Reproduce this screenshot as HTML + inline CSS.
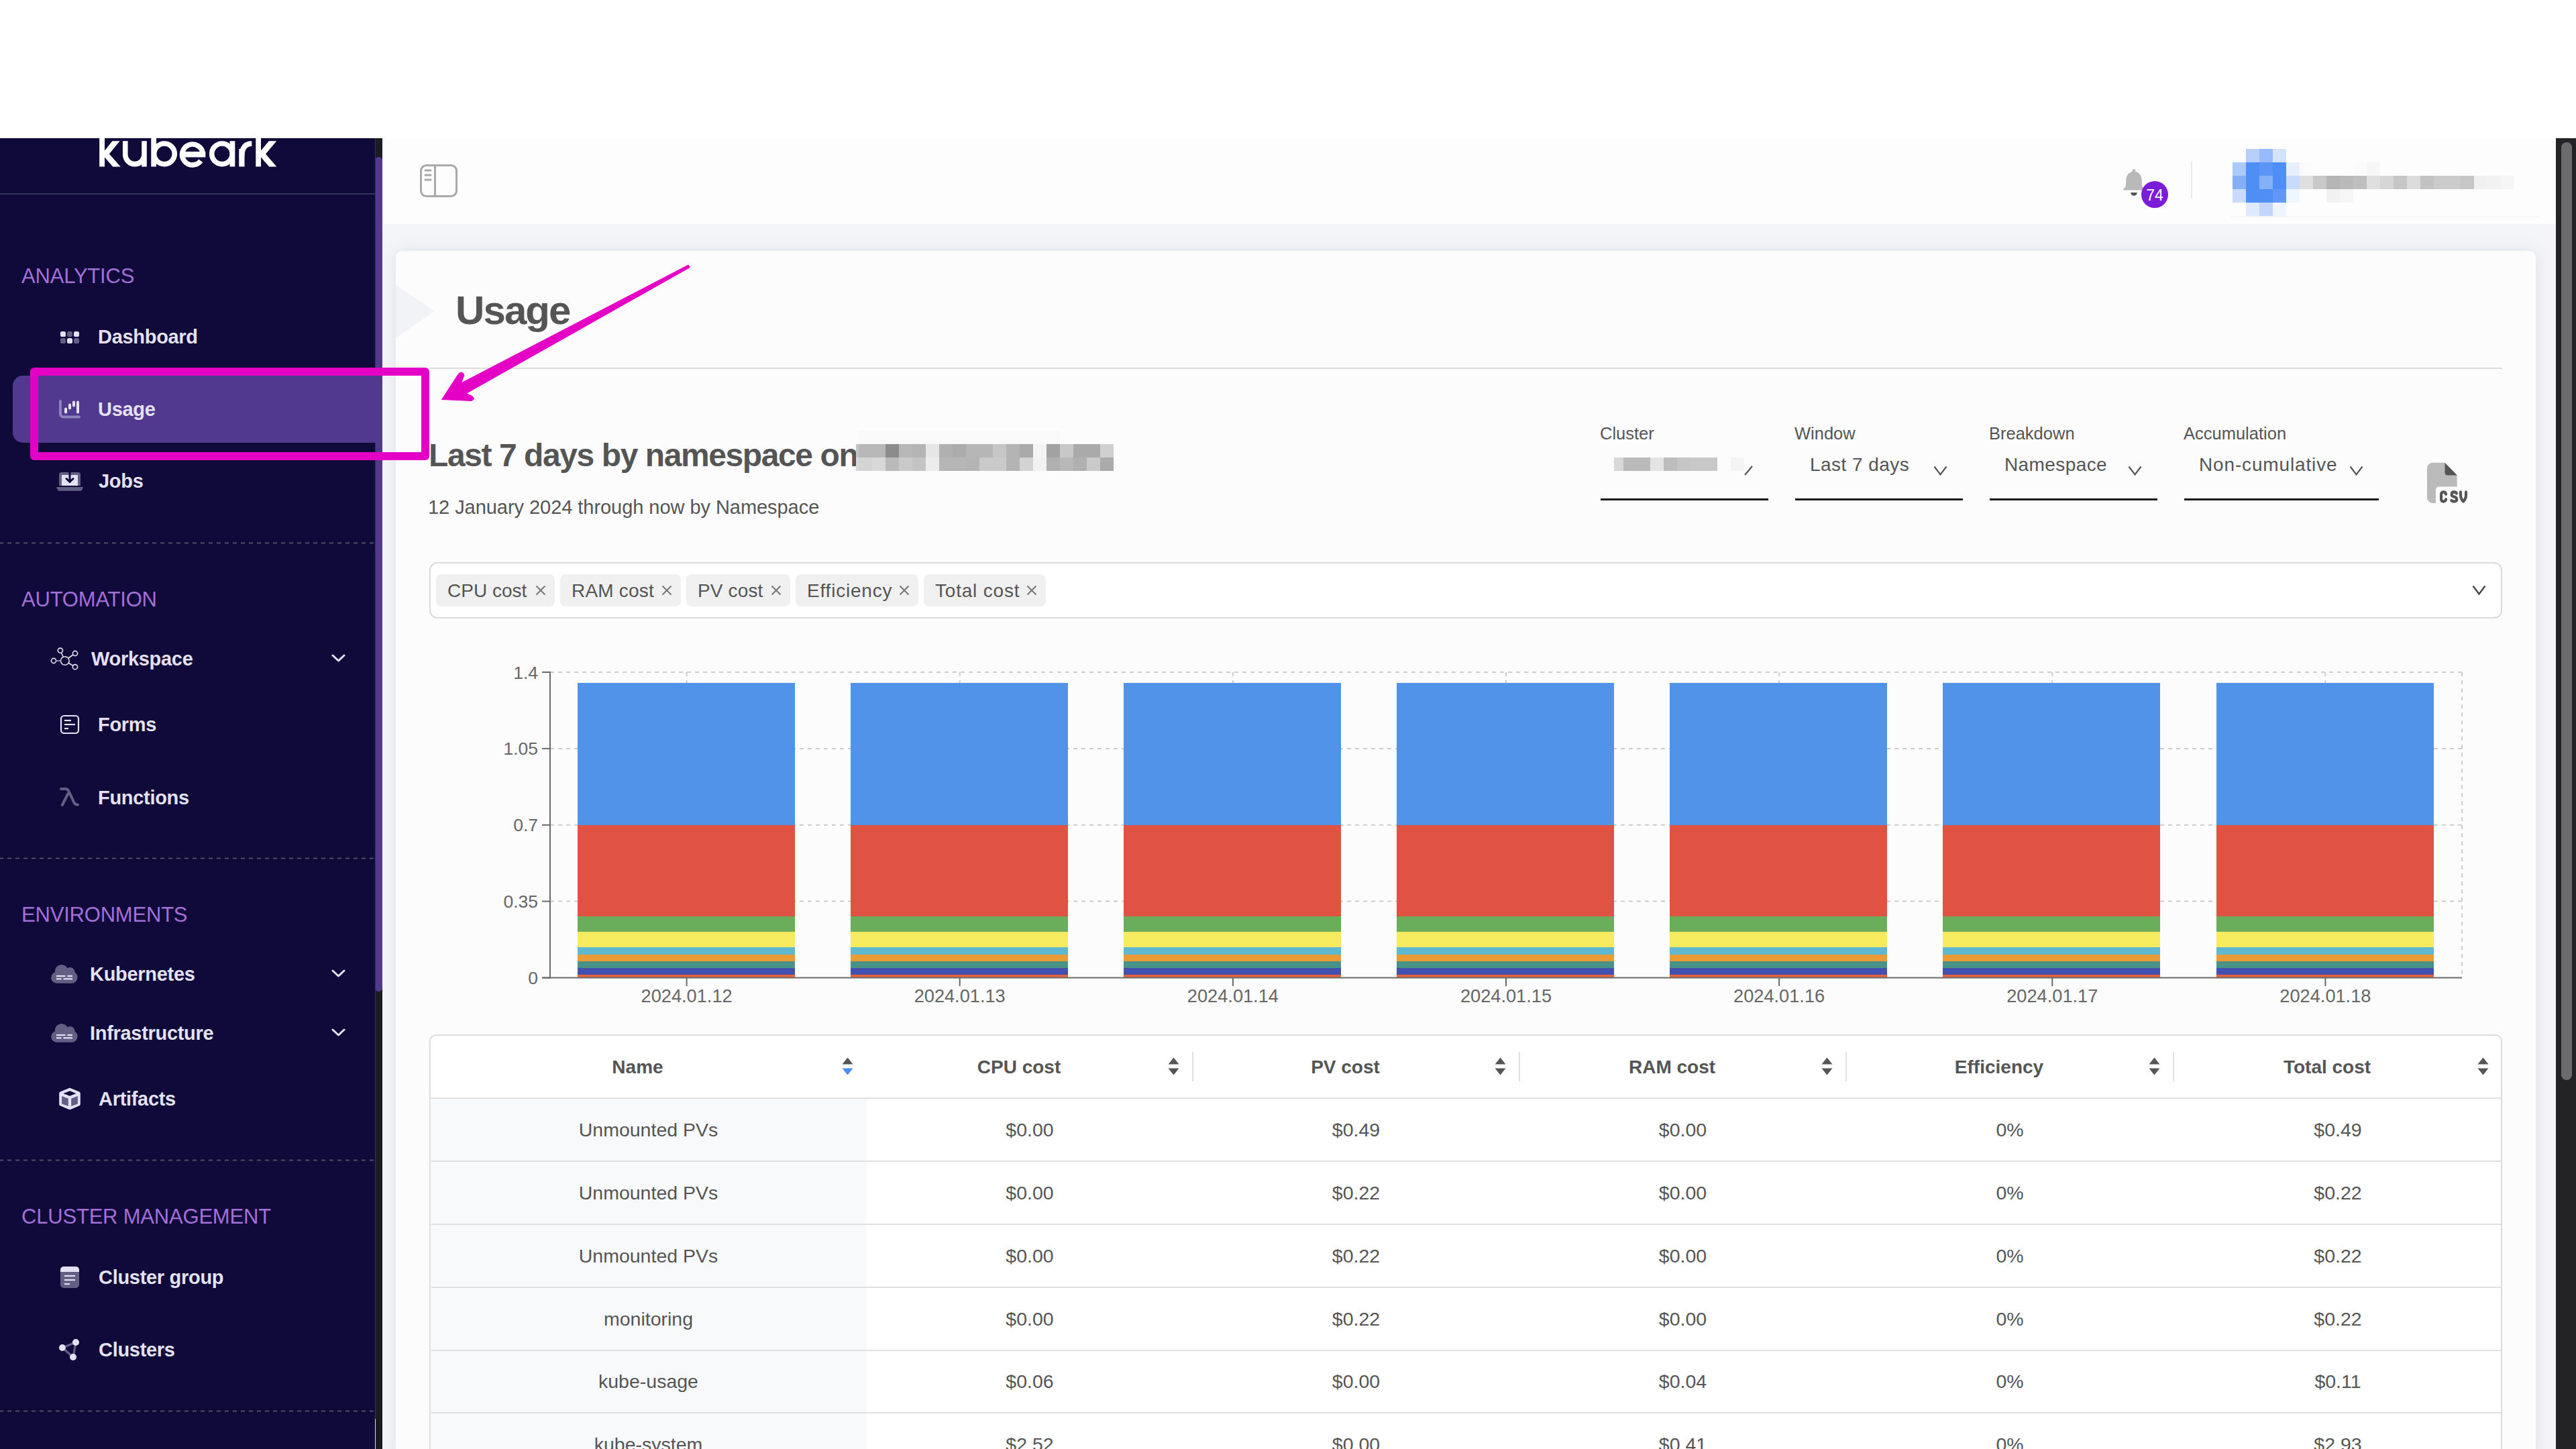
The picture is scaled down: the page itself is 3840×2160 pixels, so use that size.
<!DOCTYPE html><html><head><meta charset="utf-8"><title>Usage</title><style>
html,body{margin:0;padding:0;width:3840px;height:2160px;overflow:hidden;background:#ffffff;font-family:"Liberation Sans",sans-serif;}
.t{position:absolute;white-space:nowrap;}.r{position:absolute;}svg{position:absolute;overflow:visible;}
</style></head><body>
<div class="r" style="left:0.0px;top:206.0px;width:559.0px;height:1954.0px;background:#0f0a3a;"></div>
<div class="r" style="left:559.0px;top:206.0px;width:11.0px;height:1954.0px;background:#1b1b24;"></div>
<div class="r" style="left:559.0px;top:234.0px;width:11.0px;height:1244.0px;background:#513a8e;border-radius:6px;"></div>
<div class="r" style="left:559.0px;top:206.0px;width:1.0px;height:354.0px;background:#34374e;"></div>
<div class="r" style="left:559.0px;top:660.0px;width:1.0px;height:1500.0px;background:#34374e;"></div>
<div class="r" style="left:558.5px;top:2115.0px;width:1.2px;height:45.0px;background:#d8d8e0;"></div>
<svg style="left:0;top:0" width="600" height="300"><g fill="#ffffff"><rect x="148.2" y="180" width="7.8" height="68.4"/><polygon points="167.5,210.3 178.6,210.3 162.8,229.6 179.7,248.4 168.3,248.4 156,234.5 156,224.5"/><rect x="225.3" y="180" width="7.7" height="68.4"/><rect x="342.6" y="210.3" width="7.7" height="38.1"/><rect x="356.3" y="222" width="8.2" height="26.4"/><rect x="381.3" y="180" width="7.7" height="68.4"/><polygon points="400.8,210.3 412.3,210.3 396,229.6 412.3,248.4 401.3,248.4 389,234.5 389,224.5"/><rect x="268" y="226" width="38.3" height="8.4"/></g><g fill="none" stroke="#ffffff" stroke-width="7.6"><path d="M186.75 210.3 V230.5 A14.1 14.1 0 0 0 215 230.5 M215 210.3 V248.4"/><circle cx="245" cy="229.35" r="15.3"/><path d="M299.3 239.8 A15.4 15.4 0 1 1 302.4 229.35"/><circle cx="331" cy="229.35" r="15.3"/><path d="M360.4 234 Q360.4 214.1 375.3 214.1"/></g></svg>
<div class="r" style="left:0.0px;top:288.0px;width:559.0px;height:2.0px;background:#34345a;"></div>
<div class="t" style="left:32.0px;top:395.8px;font-size:31px;line-height:31px;color:#a46fd6;letter-spacing:-0.2px;">ANALYTICS</div>
<div class="t" style="left:32.0px;top:877.8px;font-size:31px;line-height:31px;color:#a46fd6;letter-spacing:-0.2px;">AUTOMATION</div>
<div class="t" style="left:32.0px;top:1347.8px;font-size:31px;line-height:31px;color:#a46fd6;letter-spacing:-0.2px;">ENVIRONMENTS</div>
<div class="t" style="left:32.0px;top:1798.3px;font-size:31px;line-height:31px;color:#a46fd6;letter-spacing:-0.2px;">CLUSTER MANAGEMENT</div>
<svg style="left:0;top:807.5px" width="559" height="3"><line x1="0" y1="1.5" x2="559" y2="1.5" stroke="#4b4c6a" stroke-width="2" stroke-dasharray="6 6" stroke-dashoffset="1"/></svg>
<svg style="left:0;top:1277.5px" width="559" height="3"><line x1="0" y1="1.5" x2="559" y2="1.5" stroke="#4b4c6a" stroke-width="2" stroke-dasharray="6 6" stroke-dashoffset="1"/></svg>
<svg style="left:0;top:1727.5px" width="559" height="3"><line x1="0" y1="1.5" x2="559" y2="1.5" stroke="#4b4c6a" stroke-width="2" stroke-dasharray="6 6" stroke-dashoffset="1"/></svg>
<svg style="left:0;top:2101.5px" width="559" height="3"><line x1="0" y1="1.5" x2="559" y2="1.5" stroke="#4b4c6a" stroke-width="2" stroke-dasharray="6 6" stroke-dashoffset="1"/></svg>
<div class="r" style="left:19.0px;top:560.0px;width:540.0px;height:100.0px;background:#51398f;border-radius:15px 0 0 15px;"></div>
<div class="t" style="left:146.0px;top:488.0px;font-size:29px;line-height:29px;color:#e4e1f3;font-weight:700;letter-spacing:-0.3px;">Dashboard</div>
<div class="t" style="left:146.0px;top:595.5px;font-size:29px;line-height:29px;color:#e4e1f3;font-weight:700;letter-spacing:-0.3px;">Usage</div>
<div class="t" style="left:147.0px;top:703.0px;font-size:29px;line-height:29px;color:#e4e1f3;font-weight:700;letter-spacing:-0.3px;">Jobs</div>
<div class="t" style="left:146.0px;top:1065.5px;font-size:29px;line-height:29px;color:#e4e1f3;font-weight:700;letter-spacing:-0.3px;">Forms</div>
<div class="t" style="left:146.0px;top:1174.5px;font-size:29px;line-height:29px;color:#e4e1f3;font-weight:700;letter-spacing:-0.3px;">Functions</div>
<div class="t" style="left:147.0px;top:1623.5px;font-size:29px;line-height:29px;color:#e4e1f3;font-weight:700;letter-spacing:-0.3px;">Artifacts</div>
<div class="t" style="left:147.0px;top:1889.5px;font-size:29px;line-height:29px;color:#e4e1f3;font-weight:700;letter-spacing:-0.3px;">Cluster group</div>
<div class="t" style="left:147.0px;top:1998.0px;font-size:29px;line-height:29px;color:#e4e1f3;font-weight:700;letter-spacing:-0.3px;">Clusters</div>
<div class="t" style="left:136.0px;top:967.5px;font-size:29px;line-height:29px;color:#e4e1f3;font-weight:700;letter-spacing:-0.3px;">Workspace</div>
<div class="t" style="left:134.0px;top:1438.0px;font-size:29px;line-height:29px;color:#e4e1f3;font-weight:700;letter-spacing:-0.3px;">Kubernetes</div>
<div class="t" style="left:134.0px;top:1525.5px;font-size:29px;line-height:29px;color:#e4e1f3;font-weight:700;letter-spacing:-0.3px;">Infrastructure</div>
<svg style="left:494px;top:975px" width="21" height="12"><polyline points="2,2 10.5,10 19,2" fill="none" stroke="#e4e1f3" stroke-width="3" stroke-linecap="round" stroke-linejoin="round"/></svg>
<svg style="left:494px;top:1444.5px" width="21" height="12"><polyline points="2,2 10.5,10 19,2" fill="none" stroke="#e4e1f3" stroke-width="3" stroke-linecap="round" stroke-linejoin="round"/></svg>
<svg style="left:494px;top:1532.5px" width="21" height="12"><polyline points="2,2 10.5,10 19,2" fill="none" stroke="#e4e1f3" stroke-width="3" stroke-linecap="round" stroke-linejoin="round"/></svg>
<svg style="left:0;top:0" width="600" height="2160"><rect x="90" y="494" width="8" height="8" rx="2.6" fill="#e4e1f3"/><rect x="100" y="494" width="8" height="8" rx="2.6" fill="#625f85"/><rect x="110" y="494" width="8" height="8" rx="2.6" fill="#e4e1f3"/><rect x="90" y="504" width="8" height="8" rx="2.6" fill="#625f85"/><rect x="100" y="504" width="8" height="8" rx="2.6" fill="#e4e1f3"/><rect x="110" y="504" width="8" height="8" rx="2.6" fill="#625f85"/><path d="M90 598 V617 a4.5 4.5 0 0 0 4.5 4.5 H118" fill="none" stroke="#8e84bd" stroke-width="4" stroke-linecap="round"/><line x1="98" y1="609.5" x2="98" y2="614.5" stroke="#e4e1f3" stroke-width="4" stroke-linecap="round"/><line x1="104" y1="603.5" x2="104" y2="608.5" stroke="#e4e1f3" stroke-width="4" stroke-linecap="round"/><line x1="110" y1="599.5" x2="110" y2="604.5" stroke="#e4e1f3" stroke-width="4" stroke-linecap="round"/><line x1="116" y1="599.5" x2="116" y2="614.5" stroke="#e4e1f3" stroke-width="4" stroke-linecap="round"/><path d="M88 708 a4 4 0 0 1 4 -4 H116 a4 4 0 0 1 4 4 V724 H88z" fill="#625f85"/><rect x="92" y="708" width="24" height="16" fill="#e4e1f3"/><path d="M104 704 V718 M99 713.5 L104 718.5 L109 713.5" fill="none" stroke="#0f0a3a" stroke-width="3" stroke-linecap="round" stroke-linejoin="round"/><path d="M84 726 H124 L122.5 729.5 a3 3 0 0 1 -2.8 2.3 H88.3 a3 3 0 0 1 -2.8 -2.3z" fill="#625f85"/><g fill="none" stroke="#e4e1f3" stroke-width="1.6"><circle cx="96.8" cy="985" r="6.3"/><circle cx="89.9" cy="969.7" r="3.6"/><circle cx="112" cy="974" r="3.6"/><circle cx="112" cy="994.2" r="3.6"/><circle cx="80" cy="985" r="3.6"/><line x1="91.4" y1="973" x2="94.2" y2="979.3"/><line x1="109" y1="976" x2="102" y2="981"/><line x1="109" y1="992.3" x2="102.3" y2="988.5"/></g><line x1="83.6" y1="985" x2="90.5" y2="985" stroke="#8e8aab" stroke-width="2"/><rect x="91" y="1067" width="26" height="26" rx="4.5" fill="none" stroke="#e4e1f3" stroke-width="2.2"/><g stroke="#e4e1f3" stroke-width="2.2"><line x1="96" y1="1074" x2="106" y2="1074"/><line x1="96" y1="1080" x2="112" y2="1080"/><line x1="96" y1="1086" x2="102" y2="1086"/></g><path d="M91 1176 H98 Q101 1176 102.5 1179.5 L110.5 1196.5 Q112 1199.5 115 1199.5 H116 M101.2 1183.5 L92.8 1200" fill="none" stroke="#625f85" stroke-width="4" stroke-linecap="round"/><g fill="#625f85"><circle cx="91.7" cy="1447.8" r="9.8"/><circle cx="104.3" cy="1449.2" r="7.3"/><circle cx="84.6" cy="1457.4" r="8.4"/><circle cx="106.8" cy="1457.0" r="8.8"/><rect x="84.6" y="1449.0" width="22.2" height="16.8"/></g><g stroke="#e4e1f3" stroke-width="2.2"><line x1="84" y1="1455.0" x2="97.5" y2="1455.0"/><line x1="100.5" y1="1455.0" x2="108" y2="1455.0"/><line x1="84" y1="1459.2" x2="91.5" y2="1459.2"/><line x1="94.5" y1="1459.2" x2="108" y2="1459.2"/></g><g fill="#625f85"><circle cx="91.7" cy="1535.8" r="9.8"/><circle cx="104.3" cy="1537.2" r="7.3"/><circle cx="84.6" cy="1545.4" r="8.4"/><circle cx="106.8" cy="1545.0" r="8.8"/><rect x="84.6" y="1537.0" width="22.2" height="16.8"/></g><g stroke="#e4e1f3" stroke-width="2.2"><line x1="84" y1="1543.0" x2="97.5" y2="1543.0"/><line x1="100.5" y1="1543.0" x2="108" y2="1543.0"/><line x1="84" y1="1547.2" x2="91.5" y2="1547.2"/><line x1="94.5" y1="1547.2" x2="108" y2="1547.2"/></g><path d="M104 1624.3 L117.3 1629.7 V1646 L104 1651.6 L90.7 1646 V1629.7z" fill="#e4e1f3" stroke="#e4e1f3" stroke-width="5" stroke-linejoin="round"/><path d="M94.3 1630 L104 1626.2 L113.5 1630 L104 1633.8z" fill="#0f0a3a"/><path d="M92.1 1634 L101.8 1637.6 V1649 L92.1 1645.6z" fill="#625f85"/><path d="M106.2 1637.6 L115.9 1634 V1645.6 L106.2 1649z" fill="#625f85"/><rect x="90" y="1888" width="28" height="32" rx="5" fill="#625f85"/><path d="M90 1896 V1893 a5 5 0 0 1 5 -5 H113 a5 5 0 0 1 5 5 V1896z" fill="#e4e1f3"/><g stroke="#e4e1f3" stroke-width="2.2"><line x1="96" y1="1902" x2="112" y2="1902"/><line x1="96" y1="1908" x2="112" y2="1908"/><line x1="96" y1="1914" x2="104" y2="1914"/></g><g stroke="#625f85" stroke-width="3.2"><line x1="92.9" y1="2009" x2="113" y2="2001"/><line x1="92.9" y1="2009" x2="109" y2="2023"/><line x1="113" y1="2001" x2="109" y2="2023"/></g><g fill="#e4e1f3"><circle cx="92.9" cy="2009" r="4.9"/><circle cx="113" cy="2001" r="5"/><circle cx="109" cy="2023" r="5"/></g></svg>
<div class="r" style="left:570.0px;top:206.0px;width:3240.0px;height:128.0px;background:#fdfdfd;"></div>
<div class="r" style="left:570.0px;top:334.0px;width:3240.0px;height:1826.0px;background:#f4f5f8;"></div>
<div class="r" style="left:3810.0px;top:206.0px;width:30.0px;height:1954.0px;background:#232326;"></div>
<div class="r" style="left:3818.0px;top:212.0px;width:16.0px;height:1398.0px;background:#6b6b6e;border-radius:8px;"></div>
<div class="r" style="left:590.0px;top:374.0px;width:3190.0px;height:1806.0px;background:#fcfcfd;border-radius:10px;box-shadow:0 0 28px rgba(20,20,70,0.085);"></div>
<svg style="left:590px;top:424px" width="60" height="82"><polygon points="0,0 57.5,40 0,80" fill="#f2f3f7"/></svg>
<div class="t" style="left:679.0px;top:433.2px;font-size:60px;line-height:60px;color:#555555;font-weight:700;letter-spacing:-1.9px;">Usage</div>
<div class="r" style="left:640.0px;top:548.0px;width:3090.0px;height:2.0px;background:#dcdcdf;"></div>
<div class="t" style="left:639.0px;top:655.4px;font-size:48px;line-height:48px;color:#555555;font-weight:700;letter-spacing:-1.42px;">Last 7 days by namespace on</div>
<div class="t" style="left:638.0px;top:742.0px;font-size:29px;line-height:29px;color:#555555;letter-spacing:-0.05px;">12 January 2024 through now by Namespace</div>
<svg style="left:626px;top:245px" width="57" height="50"><rect x="1.5" y="1.5" width="53" height="46" rx="8" fill="none" stroke="#a9a9a9" stroke-width="3"/><line x1="22.5" y1="2" x2="22.5" y2="48" stroke="#a9a9a9" stroke-width="3"/><line x1="8" y1="9" x2="16" y2="9" stroke="#a9a9a9" stroke-width="3" stroke-linecap="round"/><line x1="8" y1="16" x2="16" y2="16" stroke="#a9a9a9" stroke-width="3" stroke-linecap="round"/><line x1="8" y1="23" x2="16" y2="23" stroke="#a9a9a9" stroke-width="3" stroke-linecap="round"/></svg>
<svg style="left:3161px;top:250px" width="40" height="44" viewBox="0 0 40 44"><path d="M20 2 a2.3 2.3 0 0 1 2.3 2.3 v1.4 C28.5 7.2 31.8 12.5 31.8 19 v6 c0 1.5 0.6 3 1.6 4.2 l2.2 2.6 a1.2 1.2 0 0 1 -0.9 1.8 H5.3 a1.2 1.2 0 0 1 -0.9 -1.8 l2.2 -2.6 c1 -1.2 1.6 -2.7 1.6 -4.2 V19 C8.2 12.5 11.5 7.2 17.7 5.7 V4.3 A2.3 2.3 0 0 1 20 2z" fill="#b9b9b9"/><path d="M15.2 37 h9.6 a4.8 4.8 0 0 1 -9.6 0z" fill="#555"/></svg>
<div class="r" style="left:3192px;top:270px;width:40px;height:40px;border-radius:50%;background:#7a1cd8;"></div>
<div class="t" style="left:3192.0px;width:40px;text-align:center;top:280.0px;font-size:23px;line-height:23px;color:#ffffff;">74</div>
<div class="r" style="left:3266.0px;top:240.0px;width:2.0px;height:56.0px;background:#ececec;"></div>
<div class="r" style="left:3325.0px;top:322.0px;width:460.0px;height:1.5px;background:#f5f5f5;"></div>
<div class="r" style="left:3328.0px;top:222.0px;width:20.0px;height:20.0px;background:#fdfdff;"></div>
<div class="r" style="left:3348.0px;top:222.0px;width:20.0px;height:20.0px;background:#b6cffa;"></div>
<div class="r" style="left:3368.0px;top:222.0px;width:20.0px;height:20.0px;background:#96bafa;"></div>
<div class="r" style="left:3388.0px;top:222.0px;width:20.0px;height:20.0px;background:#d4e3fc;"></div>
<div class="r" style="left:3328.0px;top:242.0px;width:20.0px;height:20.0px;background:#abc9fa;"></div>
<div class="r" style="left:3348.0px;top:242.0px;width:20.0px;height:20.0px;background:#4e8ef5;"></div>
<div class="r" style="left:3368.0px;top:242.0px;width:20.0px;height:20.0px;background:#5b95f5;"></div>
<div class="r" style="left:3388.0px;top:242.0px;width:20.0px;height:20.0px;background:#4f8ef5;"></div>
<div class="r" style="left:3408.0px;top:242.0px;width:20.0px;height:20.0px;background:#e7effd;"></div>
<div class="r" style="left:3428.0px;top:242.0px;width:20.0px;height:20.0px;background:#fbfbfb;"></div>
<div class="r" style="left:3508.0px;top:242.0px;width:20.0px;height:20.0px;background:#fbfbfb;"></div>
<div class="r" style="left:3528.0px;top:242.0px;width:20.0px;height:20.0px;background:#f7f7f7;"></div>
<div class="r" style="left:3328.0px;top:262.0px;width:20.0px;height:20.0px;background:#86aef7;"></div>
<div class="r" style="left:3348.0px;top:262.0px;width:20.0px;height:20.0px;background:#4f8ef5;"></div>
<div class="r" style="left:3368.0px;top:262.0px;width:20.0px;height:20.0px;background:#86b0f8;"></div>
<div class="r" style="left:3388.0px;top:262.0px;width:20.0px;height:20.0px;background:#4e8ef5;"></div>
<div class="r" style="left:3408.0px;top:262.0px;width:20.0px;height:20.0px;background:#c8dbfb;"></div>
<div class="r" style="left:3328.0px;top:282.0px;width:20.0px;height:20.0px;background:#c8dbfb;"></div>
<div class="r" style="left:3348.0px;top:282.0px;width:20.0px;height:20.0px;background:#4f8ef5;"></div>
<div class="r" style="left:3368.0px;top:282.0px;width:20.0px;height:20.0px;background:#4e8ef5;"></div>
<div class="r" style="left:3388.0px;top:282.0px;width:20.0px;height:20.0px;background:#6198f5;"></div>
<div class="r" style="left:3408.0px;top:282.0px;width:20.0px;height:20.0px;background:#f0f6fe;"></div>
<div class="r" style="left:3468.0px;top:282.0px;width:20.0px;height:20.0px;background:#f1f1f1;"></div>
<div class="r" style="left:3488.0px;top:282.0px;width:20.0px;height:20.0px;background:#f6f6f6;"></div>
<div class="r" style="left:3348.0px;top:302.0px;width:20.0px;height:20.0px;background:#deeafd;"></div>
<div class="r" style="left:3368.0px;top:302.0px;width:20.0px;height:20.0px;background:#c2d6fb;"></div>
<div class="r" style="left:3388.0px;top:302.0px;width:20.0px;height:20.0px;background:#eff5fe;"></div>
<div class="r" style="left:3428.0px;top:262.0px;width:20.0px;height:20.0px;background:#dfdfdf;"></div>
<div class="r" style="left:3448.0px;top:262.0px;width:20.0px;height:20.0px;background:#c8c8c8;"></div>
<div class="r" style="left:3468.0px;top:262.0px;width:20.0px;height:20.0px;background:#b5b5b5;"></div>
<div class="r" style="left:3488.0px;top:262.0px;width:20.0px;height:20.0px;background:#bababa;"></div>
<div class="r" style="left:3508.0px;top:262.0px;width:20.0px;height:20.0px;background:#bebebe;"></div>
<div class="r" style="left:3528.0px;top:262.0px;width:20.0px;height:20.0px;background:#dfdfdf;"></div>
<div class="r" style="left:3548.0px;top:262.0px;width:20.0px;height:20.0px;background:#d6d6d6;"></div>
<div class="r" style="left:3568.0px;top:262.0px;width:20.0px;height:20.0px;background:#c6c6c6;"></div>
<div class="r" style="left:3588.0px;top:262.0px;width:20.0px;height:20.0px;background:#dcdcdc;"></div>
<div class="r" style="left:3608.0px;top:262.0px;width:20.0px;height:20.0px;background:#c3c3c3;"></div>
<div class="r" style="left:3628.0px;top:262.0px;width:20.0px;height:20.0px;background:#cbcbcb;"></div>
<div class="r" style="left:3648.0px;top:262.0px;width:20.0px;height:20.0px;background:#cbcbcb;"></div>
<div class="r" style="left:3668.0px;top:262.0px;width:20.0px;height:20.0px;background:#c7c7c7;"></div>
<div class="r" style="left:3688.0px;top:262.0px;width:20.0px;height:20.0px;background:#f0f0f0;"></div>
<div class="r" style="left:3708.0px;top:262.0px;width:20.0px;height:20.0px;background:#f2f2f2;"></div>
<div class="r" style="left:3728.0px;top:262.0px;width:20.0px;height:20.0px;background:#f6f6f6;"></div>
<div class="r" style="left:1276.0px;top:662.0px;width:4.0px;height:20.0px;background:#c4c4c4;"></div>
<div class="r" style="left:1276.0px;top:682.0px;width:4.0px;height:20.0px;background:#d8d8d8;"></div>
<div class="r" style="left:1280.0px;top:662.0px;width:20.0px;height:20.0px;background:#b8b8b8;"></div>
<div class="r" style="left:1300.0px;top:662.0px;width:20.0px;height:20.0px;background:#b8b8b8;"></div>
<div class="r" style="left:1320.0px;top:662.0px;width:20.0px;height:20.0px;background:#8c8c8c;"></div>
<div class="r" style="left:1340.0px;top:662.0px;width:20.0px;height:20.0px;background:#b8b8b8;"></div>
<div class="r" style="left:1360.0px;top:662.0px;width:20.0px;height:20.0px;background:#b4b4b4;"></div>
<div class="r" style="left:1380.0px;top:662.0px;width:20.0px;height:20.0px;background:#e6e6e6;"></div>
<div class="r" style="left:1400.0px;top:662.0px;width:20.0px;height:20.0px;background:#b0b0b0;"></div>
<div class="r" style="left:1420.0px;top:662.0px;width:20.0px;height:20.0px;background:#acacac;"></div>
<div class="r" style="left:1440.0px;top:662.0px;width:20.0px;height:20.0px;background:#b6b6b6;"></div>
<div class="r" style="left:1460.0px;top:662.0px;width:20.0px;height:20.0px;background:#b6b6b6;"></div>
<div class="r" style="left:1480.0px;top:662.0px;width:20.0px;height:20.0px;background:#c6c6c6;"></div>
<div class="r" style="left:1500.0px;top:662.0px;width:20.0px;height:20.0px;background:#b4b4b4;"></div>
<div class="r" style="left:1520.0px;top:662.0px;width:20.0px;height:20.0px;background:#aaaaaa;"></div>
<div class="r" style="left:1540.0px;top:662.0px;width:20.0px;height:20.0px;background:#f4f4f4;"></div>
<div class="r" style="left:1560.0px;top:662.0px;width:20.0px;height:20.0px;background:#a2a2a2;"></div>
<div class="r" style="left:1580.0px;top:662.0px;width:20.0px;height:20.0px;background:#c8c8c8;"></div>
<div class="r" style="left:1600.0px;top:662.0px;width:20.0px;height:20.0px;background:#aaaaaa;"></div>
<div class="r" style="left:1620.0px;top:662.0px;width:20.0px;height:20.0px;background:#aaaaaa;"></div>
<div class="r" style="left:1640.0px;top:662.0px;width:20.0px;height:20.0px;background:#d0d0d0;"></div>
<div class="r" style="left:1280.0px;top:682.0px;width:20.0px;height:20.0px;background:#d4d4d4;"></div>
<div class="r" style="left:1300.0px;top:682.0px;width:20.0px;height:20.0px;background:#d8d8d8;"></div>
<div class="r" style="left:1320.0px;top:682.0px;width:20.0px;height:20.0px;background:#bababa;"></div>
<div class="r" style="left:1340.0px;top:682.0px;width:20.0px;height:20.0px;background:#cacaca;"></div>
<div class="r" style="left:1360.0px;top:682.0px;width:20.0px;height:20.0px;background:#c4c4c4;"></div>
<div class="r" style="left:1380.0px;top:682.0px;width:20.0px;height:20.0px;background:#ececec;"></div>
<div class="r" style="left:1400.0px;top:682.0px;width:20.0px;height:20.0px;background:#b6b6b6;"></div>
<div class="r" style="left:1420.0px;top:682.0px;width:20.0px;height:20.0px;background:#b6b6b6;"></div>
<div class="r" style="left:1440.0px;top:682.0px;width:20.0px;height:20.0px;background:#b4b4b4;"></div>
<div class="r" style="left:1460.0px;top:682.0px;width:20.0px;height:20.0px;background:#cacaca;"></div>
<div class="r" style="left:1480.0px;top:682.0px;width:20.0px;height:20.0px;background:#cacaca;"></div>
<div class="r" style="left:1500.0px;top:682.0px;width:20.0px;height:20.0px;background:#b4b4b4;"></div>
<div class="r" style="left:1520.0px;top:682.0px;width:20.0px;height:20.0px;background:#d4d4d4;"></div>
<div class="r" style="left:1540.0px;top:682.0px;width:20.0px;height:20.0px;background:#f2f2f2;"></div>
<div class="r" style="left:1560.0px;top:682.0px;width:20.0px;height:20.0px;background:#b0b0b0;"></div>
<div class="r" style="left:1580.0px;top:682.0px;width:20.0px;height:20.0px;background:#b8b8b8;"></div>
<div class="r" style="left:1600.0px;top:682.0px;width:20.0px;height:20.0px;background:#b0b0b0;"></div>
<div class="r" style="left:1620.0px;top:682.0px;width:20.0px;height:20.0px;background:#cacaca;"></div>
<div class="r" style="left:1640.0px;top:682.0px;width:20.0px;height:20.0px;background:#aaaaaa;"></div>
<div class="r" style="left:1280.0px;top:642.0px;width:20.0px;height:20.0px;background:#f9f9f9;"></div>
<div class="r" style="left:1300.0px;top:642.0px;width:20.0px;height:20.0px;background:#f9f9f9;"></div>
<div class="r" style="left:1320.0px;top:642.0px;width:20.0px;height:20.0px;background:#f9f9f9;"></div>
<div class="r" style="left:1340.0px;top:642.0px;width:20.0px;height:20.0px;background:#f9f9f9;"></div>
<div class="r" style="left:1360.0px;top:642.0px;width:20.0px;height:20.0px;background:#f9f9f9;"></div>
<div class="r" style="left:1380.0px;top:642.0px;width:20.0px;height:20.0px;background:#f9f9f9;"></div>
<div class="r" style="left:1400.0px;top:642.0px;width:20.0px;height:20.0px;background:#f9f9f9;"></div>
<div class="r" style="left:1420.0px;top:642.0px;width:20.0px;height:20.0px;background:#f9f9f9;"></div>
<div class="r" style="left:1440.0px;top:642.0px;width:20.0px;height:20.0px;background:#f9f9f9;"></div>
<div class="r" style="left:1460.0px;top:642.0px;width:20.0px;height:20.0px;background:#f9f9f9;"></div>
<div class="r" style="left:1480.0px;top:642.0px;width:20.0px;height:20.0px;background:#f9f9f9;"></div>
<div class="r" style="left:1500.0px;top:642.0px;width:20.0px;height:20.0px;background:#f9f9f9;"></div>
<div class="r" style="left:1520.0px;top:642.0px;width:20.0px;height:20.0px;background:#f9f9f9;"></div>
<div class="r" style="left:1540.0px;top:642.0px;width:20.0px;height:20.0px;background:#f9f9f9;"></div>
<div class="r" style="left:1560.0px;top:642.0px;width:20.0px;height:20.0px;background:#f9f9f9;"></div>
<div class="t" style="left:2385.0px;top:633.9px;font-size:25.5px;line-height:25.5px;color:#555555;">Cluster</div>
<div class="t" style="left:2675.0px;top:633.9px;font-size:25.5px;line-height:25.5px;color:#555555;">Window</div>
<div class="t" style="left:2965.0px;top:633.9px;font-size:25.5px;line-height:25.5px;color:#555555;">Breakdown</div>
<div class="t" style="left:3255.0px;top:633.9px;font-size:25.5px;line-height:25.5px;color:#555555;">Accumulation</div>
<div class="r" style="left:2386.0px;top:743.0px;width:250.0px;height:2.5px;background:#1a1a1a;"></div>
<div class="r" style="left:2676.0px;top:743.0px;width:250.0px;height:2.5px;background:#1a1a1a;"></div>
<div class="r" style="left:2966.0px;top:743.0px;width:250.0px;height:2.5px;background:#1a1a1a;"></div>
<div class="r" style="left:3256.0px;top:743.0px;width:290.0px;height:2.5px;background:#1a1a1a;"></div>
<div class="t" style="left:2698.0px;top:679.3px;font-size:28px;line-height:28px;color:#555555;letter-spacing:0.45px;">Last 7 days</div>
<div class="t" style="left:2988.0px;top:679.3px;font-size:28px;line-height:28px;color:#555555;letter-spacing:0.4px;">Namespace</div>
<div class="t" style="left:3278.0px;top:679.3px;font-size:28px;line-height:28px;color:#555555;letter-spacing:0.85px;">Non-cumulative</div>
<svg style="left:2882px;top:694px" width="22" height="16"><polyline points="1.5,1.5 10.5,13.5 19.5,1.5" fill="none" stroke="#555" stroke-width="2.2"/></svg>
<svg style="left:3172px;top:694px" width="22" height="16"><polyline points="1.5,1.5 10.5,13.5 19.5,1.5" fill="none" stroke="#555" stroke-width="2.2"/></svg>
<svg style="left:3502px;top:694px" width="22" height="16"><polyline points="1.5,1.5 10.5,13.5 19.5,1.5" fill="none" stroke="#555" stroke-width="2.2"/></svg>
<div class="r" style="left:2406.0px;top:682.0px;width:14.0px;height:20.0px;background:#d8d8d8;"></div>
<div class="r" style="left:2420.0px;top:682.0px;width:20.0px;height:20.0px;background:#bababa;"></div>
<div class="r" style="left:2440.0px;top:682.0px;width:20.0px;height:20.0px;background:#bababa;"></div>
<div class="r" style="left:2460.0px;top:682.0px;width:20.0px;height:20.0px;background:#e4e4e4;"></div>
<div class="r" style="left:2480.0px;top:682.0px;width:20.0px;height:20.0px;background:#bdbdbd;"></div>
<div class="r" style="left:2500.0px;top:682.0px;width:20.0px;height:20.0px;background:#c5c5c5;"></div>
<div class="r" style="left:2520.0px;top:682.0px;width:20.0px;height:20.0px;background:#c8c8c8;"></div>
<div class="r" style="left:2540.0px;top:682.0px;width:20.0px;height:20.0px;background:#c8c8c8;"></div>
<div class="r" style="left:2580.0px;top:682.0px;width:20.0px;height:20.0px;background:#f4f4f4;"></div>
<svg style="left:2600px;top:694px" width="14" height="16"><line x1="1" y1="14" x2="12" y2="1" stroke="#555" stroke-width="2.2"/></svg>
<svg style="left:0;top:0" width="3840" height="2160"><path d="M3626 689.8 H3644.5 L3662.7 708 V725.4 H3636 A5 5 0 0 0 3631 730.4 V749.9 H3626 A8 8 0 0 1 3618 741.9 V697.8 A8 8 0 0 1 3626 689.8 Z" fill="#bababa"/><path d="M3644.5 689.8 L3662.7 708.4 H3648.5 A4 4 0 0 1 3644.5 704.4 Z" fill="#555"/><g fill="none" stroke="#555" stroke-width="4.1" stroke-linecap="round" stroke-linejoin="round"><path d="M3646.2 736.8 Q3645.5 733.4 3642.3 733.4 Q3639 733.4 3639 738 V743.5 Q3639 747.6 3642.3 747.6 Q3645.5 747.6 3646.2 744.2"/><path d="M3662 735.5 Q3661 733.4 3658 733.4 Q3654.6 733.4 3654.6 737 Q3654.6 739.8 3658 740.5 Q3662.3 741.4 3662.3 744.3 Q3662.3 747.6 3658.3 747.6 Q3655.3 747.6 3654.2 746"/><path d="M3668 733.4 V738 Q3668 743.5 3672 747.6 Q3676 743.5 3676 738 V733.4"/></g></svg>
<div class="r" style="left:640.0px;top:838.0px;width:3090.0px;height:84.0px;background:#ffffff;box-sizing:border-box;border:2px solid #dadada;border-radius:12px;"></div>
<div class="r" style="left:650.0px;top:856.0px;width:177.0px;height:48.0px;background:#f0f0f0;border-radius:8px;"></div>
<div class="t" style="left:667.0px;top:866.8px;font-size:28px;line-height:28px;color:#555555;letter-spacing:0px;">CPU cost</div>
<svg style="left:798px;top:872px" width="16" height="16"><path d="M1.5 1.5 L14.5 14.5 M14.5 1.5 L1.5 14.5" stroke="#777" stroke-width="2"/></svg>
<div class="r" style="left:835.0px;top:856.0px;width:180.0px;height:48.0px;background:#f0f0f0;border-radius:8px;"></div>
<div class="t" style="left:852.0px;top:866.8px;font-size:28px;line-height:28px;color:#555555;letter-spacing:0.2px;">RAM cost</div>
<svg style="left:986px;top:872px" width="16" height="16"><path d="M1.5 1.5 L14.5 14.5 M14.5 1.5 L1.5 14.5" stroke="#777" stroke-width="2"/></svg>
<div class="r" style="left:1023.0px;top:856.0px;width:155.0px;height:48.0px;background:#f0f0f0;border-radius:8px;"></div>
<div class="t" style="left:1040.0px;top:866.8px;font-size:28px;line-height:28px;color:#555555;letter-spacing:0.15px;">PV cost</div>
<svg style="left:1149px;top:872px" width="16" height="16"><path d="M1.5 1.5 L14.5 14.5 M14.5 1.5 L1.5 14.5" stroke="#777" stroke-width="2"/></svg>
<div class="r" style="left:1186.0px;top:856.0px;width:183.0px;height:48.0px;background:#f0f0f0;border-radius:8px;"></div>
<div class="t" style="left:1203.0px;top:866.8px;font-size:28px;line-height:28px;color:#555555;letter-spacing:0.8px;">Efficiency</div>
<svg style="left:1340px;top:872px" width="16" height="16"><path d="M1.5 1.5 L14.5 14.5 M14.5 1.5 L1.5 14.5" stroke="#777" stroke-width="2"/></svg>
<div class="r" style="left:1377.0px;top:856.0px;width:182.0px;height:48.0px;background:#f0f0f0;border-radius:8px;"></div>
<div class="t" style="left:1394.0px;top:866.8px;font-size:28px;line-height:28px;color:#555555;letter-spacing:0.8px;">Total cost</div>
<svg style="left:1530px;top:872px" width="16" height="16"><path d="M1.5 1.5 L14.5 14.5 M14.5 1.5 L1.5 14.5" stroke="#777" stroke-width="2"/></svg>
<svg style="left:3685px;top:872px" width="22" height="16"><polyline points="1.5,1.5 10.5,13.5 19.5,1.5" fill="none" stroke="#444" stroke-width="2.4"/></svg>
<svg style="left:0;top:0" width="3840" height="2160"><line x1="820" y1="1002.0" x2="3670" y2="1002.0" stroke="#cccccc" stroke-width="2" stroke-dasharray="6 6"/><line x1="820" y1="1115.9" x2="3670" y2="1115.9" stroke="#cccccc" stroke-width="2" stroke-dasharray="6 6"/><line x1="820" y1="1229.8" x2="3670" y2="1229.8" stroke="#cccccc" stroke-width="2" stroke-dasharray="6 6"/><line x1="820" y1="1343.6" x2="3670" y2="1343.6" stroke="#cccccc" stroke-width="2" stroke-dasharray="6 6"/><line x1="3670" y1="1002" x2="3670" y2="1457.5" stroke="#cccccc" stroke-width="2" stroke-dasharray="6 6"/><line x1="1023.6" y1="1002" x2="1023.6" y2="1457.5" stroke="#cccccc" stroke-width="2" stroke-dasharray="6 6"/><line x1="1430.7" y1="1002" x2="1430.7" y2="1457.5" stroke="#cccccc" stroke-width="2" stroke-dasharray="6 6"/><line x1="1837.9" y1="1002" x2="1837.9" y2="1457.5" stroke="#cccccc" stroke-width="2" stroke-dasharray="6 6"/><line x1="2245.0" y1="1002" x2="2245.0" y2="1457.5" stroke="#cccccc" stroke-width="2" stroke-dasharray="6 6"/><line x1="2652.1" y1="1002" x2="2652.1" y2="1457.5" stroke="#cccccc" stroke-width="2" stroke-dasharray="6 6"/><line x1="3059.3" y1="1002" x2="3059.3" y2="1457.5" stroke="#cccccc" stroke-width="2" stroke-dasharray="6 6"/><line x1="3466.4" y1="1002" x2="3466.4" y2="1457.5" stroke="#cccccc" stroke-width="2" stroke-dasharray="6 6"/><rect x="861.0" y="1018" width="324" height="212.0" fill="#5193e8"/><rect x="861.0" y="1230" width="324" height="136.0" fill="#e05241"/><rect x="861.0" y="1366" width="324" height="23.0" fill="#6aad5b"/><rect x="861.0" y="1389" width="324" height="23.0" fill="#f6ea5e"/><rect x="861.0" y="1412" width="324" height="11.0" fill="#5fb8d0"/><rect x="861.0" y="1423" width="324" height="10.0" fill="#e99b35"/><rect x="861.0" y="1433" width="324" height="10.0" fill="#489287"/><rect x="861.0" y="1443" width="324" height="10.0" fill="#4450b0"/><rect x="861.0" y="1453" width="324" height="4.5" fill="#e5623a"/><line x1="1023.6" y1="1457.5" x2="1023.6" y2="1470.0" stroke="#6a6a6a" stroke-width="2"/><rect x="1268.0" y="1018" width="324" height="212.0" fill="#5193e8"/><rect x="1268.0" y="1230" width="324" height="136.0" fill="#e05241"/><rect x="1268.0" y="1366" width="324" height="23.0" fill="#6aad5b"/><rect x="1268.0" y="1389" width="324" height="23.0" fill="#f6ea5e"/><rect x="1268.0" y="1412" width="324" height="11.0" fill="#5fb8d0"/><rect x="1268.0" y="1423" width="324" height="10.0" fill="#e99b35"/><rect x="1268.0" y="1433" width="324" height="10.0" fill="#489287"/><rect x="1268.0" y="1443" width="324" height="10.0" fill="#4450b0"/><rect x="1268.0" y="1453" width="324" height="4.5" fill="#e5623a"/><line x1="1430.7" y1="1457.5" x2="1430.7" y2="1470.0" stroke="#6a6a6a" stroke-width="2"/><rect x="1675.0" y="1018" width="324" height="212.0" fill="#5193e8"/><rect x="1675.0" y="1230" width="324" height="136.0" fill="#e05241"/><rect x="1675.0" y="1366" width="324" height="23.0" fill="#6aad5b"/><rect x="1675.0" y="1389" width="324" height="23.0" fill="#f6ea5e"/><rect x="1675.0" y="1412" width="324" height="11.0" fill="#5fb8d0"/><rect x="1675.0" y="1423" width="324" height="10.0" fill="#e99b35"/><rect x="1675.0" y="1433" width="324" height="10.0" fill="#489287"/><rect x="1675.0" y="1443" width="324" height="10.0" fill="#4450b0"/><rect x="1675.0" y="1453" width="324" height="4.5" fill="#e5623a"/><line x1="1837.9" y1="1457.5" x2="1837.9" y2="1470.0" stroke="#6a6a6a" stroke-width="2"/><rect x="2082.0" y="1018" width="324" height="212.0" fill="#5193e8"/><rect x="2082.0" y="1230" width="324" height="136.0" fill="#e05241"/><rect x="2082.0" y="1366" width="324" height="23.0" fill="#6aad5b"/><rect x="2082.0" y="1389" width="324" height="23.0" fill="#f6ea5e"/><rect x="2082.0" y="1412" width="324" height="11.0" fill="#5fb8d0"/><rect x="2082.0" y="1423" width="324" height="10.0" fill="#e99b35"/><rect x="2082.0" y="1433" width="324" height="10.0" fill="#489287"/><rect x="2082.0" y="1443" width="324" height="10.0" fill="#4450b0"/><rect x="2082.0" y="1453" width="324" height="4.5" fill="#e5623a"/><line x1="2245.0" y1="1457.5" x2="2245.0" y2="1470.0" stroke="#6a6a6a" stroke-width="2"/><rect x="2489.0" y="1018" width="324" height="212.0" fill="#5193e8"/><rect x="2489.0" y="1230" width="324" height="136.0" fill="#e05241"/><rect x="2489.0" y="1366" width="324" height="23.0" fill="#6aad5b"/><rect x="2489.0" y="1389" width="324" height="23.0" fill="#f6ea5e"/><rect x="2489.0" y="1412" width="324" height="11.0" fill="#5fb8d0"/><rect x="2489.0" y="1423" width="324" height="10.0" fill="#e99b35"/><rect x="2489.0" y="1433" width="324" height="10.0" fill="#489287"/><rect x="2489.0" y="1443" width="324" height="10.0" fill="#4450b0"/><rect x="2489.0" y="1453" width="324" height="4.5" fill="#e5623a"/><line x1="2652.1" y1="1457.5" x2="2652.1" y2="1470.0" stroke="#6a6a6a" stroke-width="2"/><rect x="2896.0" y="1018" width="324" height="212.0" fill="#5193e8"/><rect x="2896.0" y="1230" width="324" height="136.0" fill="#e05241"/><rect x="2896.0" y="1366" width="324" height="23.0" fill="#6aad5b"/><rect x="2896.0" y="1389" width="324" height="23.0" fill="#f6ea5e"/><rect x="2896.0" y="1412" width="324" height="11.0" fill="#5fb8d0"/><rect x="2896.0" y="1423" width="324" height="10.0" fill="#e99b35"/><rect x="2896.0" y="1433" width="324" height="10.0" fill="#489287"/><rect x="2896.0" y="1443" width="324" height="10.0" fill="#4450b0"/><rect x="2896.0" y="1453" width="324" height="4.5" fill="#e5623a"/><line x1="3059.3" y1="1457.5" x2="3059.3" y2="1470.0" stroke="#6a6a6a" stroke-width="2"/><rect x="3304.0" y="1018" width="324" height="212.0" fill="#5193e8"/><rect x="3304.0" y="1230" width="324" height="136.0" fill="#e05241"/><rect x="3304.0" y="1366" width="324" height="23.0" fill="#6aad5b"/><rect x="3304.0" y="1389" width="324" height="23.0" fill="#f6ea5e"/><rect x="3304.0" y="1412" width="324" height="11.0" fill="#5fb8d0"/><rect x="3304.0" y="1423" width="324" height="10.0" fill="#e99b35"/><rect x="3304.0" y="1433" width="324" height="10.0" fill="#489287"/><rect x="3304.0" y="1443" width="324" height="10.0" fill="#4450b0"/><rect x="3304.0" y="1453" width="324" height="4.5" fill="#e5623a"/><line x1="3466.4" y1="1457.5" x2="3466.4" y2="1470.0" stroke="#6a6a6a" stroke-width="2"/><line x1="820" y1="1001" x2="820" y2="1458.5" stroke="#6a6a6a" stroke-width="2"/><line x1="808" y1="1457.5" x2="3670" y2="1457.5" stroke="#6a6a6a" stroke-width="2"/><line x1="808" y1="1002.0" x2="820" y2="1002.0" stroke="#6a6a6a" stroke-width="2"/><line x1="808" y1="1115.9" x2="820" y2="1115.9" stroke="#6a6a6a" stroke-width="2"/><line x1="808" y1="1229.8" x2="820" y2="1229.8" stroke="#6a6a6a" stroke-width="2"/><line x1="808" y1="1343.6" x2="820" y2="1343.6" stroke="#6a6a6a" stroke-width="2"/><line x1="808" y1="1457.5" x2="820" y2="1457.5" stroke="#6a6a6a" stroke-width="2"/></svg>
<div class="t" style="left:702.0px;width:100px;text-align:right;top:989.6px;font-size:26.5px;line-height:26.5px;color:#666666;">1.4</div>
<div class="t" style="left:702.0px;width:100px;text-align:right;top:1103.4px;font-size:26.5px;line-height:26.5px;color:#666666;">1.05</div>
<div class="t" style="left:702.0px;width:100px;text-align:right;top:1217.3px;font-size:26.5px;line-height:26.5px;color:#666666;">0.7</div>
<div class="t" style="left:702.0px;width:100px;text-align:right;top:1331.2px;font-size:26.5px;line-height:26.5px;color:#666666;">0.35</div>
<div class="t" style="left:702.0px;width:100px;text-align:right;top:1445.1px;font-size:26.5px;line-height:26.5px;color:#666666;">0</div>
<div class="t" style="left:903.6px;width:240px;text-align:center;top:1471.0px;font-size:27.2px;line-height:27.2px;color:#666666;">2024.01.12</div>
<div class="t" style="left:1310.7px;width:240px;text-align:center;top:1471.0px;font-size:27.2px;line-height:27.2px;color:#666666;">2024.01.13</div>
<div class="t" style="left:1717.9px;width:240px;text-align:center;top:1471.0px;font-size:27.2px;line-height:27.2px;color:#666666;">2024.01.14</div>
<div class="t" style="left:2125.0px;width:240px;text-align:center;top:1471.0px;font-size:27.2px;line-height:27.2px;color:#666666;">2024.01.15</div>
<div class="t" style="left:2532.1px;width:240px;text-align:center;top:1471.0px;font-size:27.2px;line-height:27.2px;color:#666666;">2024.01.16</div>
<div class="t" style="left:2939.3px;width:240px;text-align:center;top:1471.0px;font-size:27.2px;line-height:27.2px;color:#666666;">2024.01.17</div>
<div class="t" style="left:3346.4px;width:240px;text-align:center;top:1471.0px;font-size:27.2px;line-height:27.2px;color:#666666;">2024.01.18</div>
<div class="r" style="left:640.0px;top:1542.0px;width:3090.0px;height:700.0px;background:#ffffff;box-sizing:border-box;border:2px solid #dcdcdc;border-radius:10px;"></div>
<div class="r" style="left:643.0px;top:1638.0px;width:649.0px;height:700.0px;background:#f8f9fb;"></div>
<div class="r" style="left:643.0px;top:1636.0px;width:3085.0px;height:2.0px;background:#e0e0e0;"></div>
<div class="r" style="left:643.0px;top:1729.7px;width:3085.0px;height:2.0px;background:#e0e0e0;"></div>
<div class="r" style="left:643.0px;top:1823.6px;width:3085.0px;height:2.0px;background:#e0e0e0;"></div>
<div class="r" style="left:643.0px;top:1917.6px;width:3085.0px;height:2.0px;background:#e0e0e0;"></div>
<div class="r" style="left:643.0px;top:2011.5px;width:3085.0px;height:2.0px;background:#e0e0e0;"></div>
<div class="r" style="left:643.0px;top:2105.4px;width:3085.0px;height:2.0px;background:#e0e0e0;"></div>
<div class="r" style="left:1777.0px;top:1568.0px;width:2.0px;height:44.0px;background:#e0e0e0;"></div>
<div class="r" style="left:2264.0px;top:1568.0px;width:2.0px;height:44.0px;background:#e0e0e0;"></div>
<div class="r" style="left:2751.0px;top:1568.0px;width:2.0px;height:44.0px;background:#e0e0e0;"></div>
<div class="r" style="left:3239.0px;top:1568.0px;width:2.0px;height:44.0px;background:#e0e0e0;"></div>
<div class="t" style="left:750.5px;width:400px;text-align:center;top:1576.8px;font-size:28px;line-height:28px;color:#555555;font-weight:700;">Name</div>
<svg style="left:1255px;top:1576px" width="18" height="28"><polygon points="0.5,10.5 8.5,0.5 16.5,10.5" fill="#555555"/><polygon points="0.5,16.5 16.5,16.5 8.5,26.5" fill="#4a8ef5"/></svg>
<div class="t" style="left:1319.0px;width:400px;text-align:center;top:1576.8px;font-size:28px;line-height:28px;color:#555555;font-weight:700;">CPU cost</div>
<svg style="left:1741px;top:1576px" width="18" height="28"><polygon points="0.5,10.5 8.5,0.5 16.5,10.5" fill="#555555"/><polygon points="0.5,16.5 16.5,16.5 8.5,26.5" fill="#555555"/></svg>
<div class="t" style="left:1805.5px;width:400px;text-align:center;top:1576.8px;font-size:28px;line-height:28px;color:#555555;font-weight:700;">PV cost</div>
<svg style="left:2228px;top:1576px" width="18" height="28"><polygon points="0.5,10.5 8.5,0.5 16.5,10.5" fill="#555555"/><polygon points="0.5,16.5 16.5,16.5 8.5,26.5" fill="#555555"/></svg>
<div class="t" style="left:2292.5px;width:400px;text-align:center;top:1576.8px;font-size:28px;line-height:28px;color:#555555;font-weight:700;">RAM cost</div>
<svg style="left:2715px;top:1576px" width="18" height="28"><polygon points="0.5,10.5 8.5,0.5 16.5,10.5" fill="#555555"/><polygon points="0.5,16.5 16.5,16.5 8.5,26.5" fill="#555555"/></svg>
<div class="t" style="left:2780.0px;width:400px;text-align:center;top:1576.8px;font-size:28px;line-height:28px;color:#555555;font-weight:700;">Efficiency</div>
<svg style="left:3203px;top:1576px" width="18" height="28"><polygon points="0.5,10.5 8.5,0.5 16.5,10.5" fill="#555555"/><polygon points="0.5,16.5 16.5,16.5 8.5,26.5" fill="#555555"/></svg>
<div class="t" style="left:3269.0px;width:400px;text-align:center;top:1576.8px;font-size:28px;line-height:28px;color:#555555;font-weight:700;">Total cost</div>
<svg style="left:3693px;top:1576px" width="18" height="28"><polygon points="0.5,10.5 8.5,0.5 16.5,10.5" fill="#555555"/><polygon points="0.5,16.5 16.5,16.5 8.5,26.5" fill="#555555"/></svg>
<div class="t" style="left:766.5px;width:400px;text-align:center;top:1669.9px;font-size:28.5px;line-height:28.5px;color:#555555;">Unmounted PVs</div>
<div class="t" style="left:1335.0px;width:400px;text-align:center;top:1669.9px;font-size:28.5px;line-height:28.5px;color:#555555;">$0.00</div>
<div class="t" style="left:1821.5px;width:400px;text-align:center;top:1669.9px;font-size:28.5px;line-height:28.5px;color:#555555;">$0.49</div>
<div class="t" style="left:2308.5px;width:400px;text-align:center;top:1669.9px;font-size:28.5px;line-height:28.5px;color:#555555;">$0.00</div>
<div class="t" style="left:2796.0px;width:400px;text-align:center;top:1669.9px;font-size:28.5px;line-height:28.5px;color:#555555;">0%</div>
<div class="t" style="left:3285.0px;width:400px;text-align:center;top:1669.9px;font-size:28.5px;line-height:28.5px;color:#555555;">$0.49</div>
<div class="t" style="left:766.5px;width:400px;text-align:center;top:1763.6px;font-size:28.5px;line-height:28.5px;color:#555555;">Unmounted PVs</div>
<div class="t" style="left:1335.0px;width:400px;text-align:center;top:1763.6px;font-size:28.5px;line-height:28.5px;color:#555555;">$0.00</div>
<div class="t" style="left:1821.5px;width:400px;text-align:center;top:1763.6px;font-size:28.5px;line-height:28.5px;color:#555555;">$0.22</div>
<div class="t" style="left:2308.5px;width:400px;text-align:center;top:1763.6px;font-size:28.5px;line-height:28.5px;color:#555555;">$0.00</div>
<div class="t" style="left:2796.0px;width:400px;text-align:center;top:1763.6px;font-size:28.5px;line-height:28.5px;color:#555555;">0%</div>
<div class="t" style="left:3285.0px;width:400px;text-align:center;top:1763.6px;font-size:28.5px;line-height:28.5px;color:#555555;">$0.22</div>
<div class="t" style="left:766.5px;width:400px;text-align:center;top:1857.5px;font-size:28.5px;line-height:28.5px;color:#555555;">Unmounted PVs</div>
<div class="t" style="left:1335.0px;width:400px;text-align:center;top:1857.5px;font-size:28.5px;line-height:28.5px;color:#555555;">$0.00</div>
<div class="t" style="left:1821.5px;width:400px;text-align:center;top:1857.5px;font-size:28.5px;line-height:28.5px;color:#555555;">$0.22</div>
<div class="t" style="left:2308.5px;width:400px;text-align:center;top:1857.5px;font-size:28.5px;line-height:28.5px;color:#555555;">$0.00</div>
<div class="t" style="left:2796.0px;width:400px;text-align:center;top:1857.5px;font-size:28.5px;line-height:28.5px;color:#555555;">0%</div>
<div class="t" style="left:3285.0px;width:400px;text-align:center;top:1857.5px;font-size:28.5px;line-height:28.5px;color:#555555;">$0.22</div>
<div class="t" style="left:766.5px;width:400px;text-align:center;top:1951.5px;font-size:28.5px;line-height:28.5px;color:#555555;">monitoring</div>
<div class="t" style="left:1335.0px;width:400px;text-align:center;top:1951.5px;font-size:28.5px;line-height:28.5px;color:#555555;">$0.00</div>
<div class="t" style="left:1821.5px;width:400px;text-align:center;top:1951.5px;font-size:28.5px;line-height:28.5px;color:#555555;">$0.22</div>
<div class="t" style="left:2308.5px;width:400px;text-align:center;top:1951.5px;font-size:28.5px;line-height:28.5px;color:#555555;">$0.00</div>
<div class="t" style="left:2796.0px;width:400px;text-align:center;top:1951.5px;font-size:28.5px;line-height:28.5px;color:#555555;">0%</div>
<div class="t" style="left:3285.0px;width:400px;text-align:center;top:1951.5px;font-size:28.5px;line-height:28.5px;color:#555555;">$0.22</div>
<div class="t" style="left:766.5px;width:400px;text-align:center;top:2045.4px;font-size:28.5px;line-height:28.5px;color:#555555;">kube-usage</div>
<div class="t" style="left:1335.0px;width:400px;text-align:center;top:2045.4px;font-size:28.5px;line-height:28.5px;color:#555555;">$0.06</div>
<div class="t" style="left:1821.5px;width:400px;text-align:center;top:2045.4px;font-size:28.5px;line-height:28.5px;color:#555555;">$0.00</div>
<div class="t" style="left:2308.5px;width:400px;text-align:center;top:2045.4px;font-size:28.5px;line-height:28.5px;color:#555555;">$0.04</div>
<div class="t" style="left:2796.0px;width:400px;text-align:center;top:2045.4px;font-size:28.5px;line-height:28.5px;color:#555555;">0%</div>
<div class="t" style="left:3285.0px;width:400px;text-align:center;top:2045.4px;font-size:28.5px;line-height:28.5px;color:#555555;">$0.11</div>
<div class="t" style="left:766.5px;width:400px;text-align:center;top:2139.3px;font-size:28.5px;line-height:28.5px;color:#555555;">kube-system</div>
<div class="t" style="left:1335.0px;width:400px;text-align:center;top:2139.3px;font-size:28.5px;line-height:28.5px;color:#555555;">$2.52</div>
<div class="t" style="left:1821.5px;width:400px;text-align:center;top:2139.3px;font-size:28.5px;line-height:28.5px;color:#555555;">$0.00</div>
<div class="t" style="left:2308.5px;width:400px;text-align:center;top:2139.3px;font-size:28.5px;line-height:28.5px;color:#555555;">$0.41</div>
<div class="t" style="left:2796.0px;width:400px;text-align:center;top:2139.3px;font-size:28.5px;line-height:28.5px;color:#555555;">0%</div>
<div class="t" style="left:3285.0px;width:400px;text-align:center;top:2139.3px;font-size:28.5px;line-height:28.5px;color:#555555;">$2.93</div>
<div class="r" style="left:45.0px;top:548.0px;width:595.0px;height:138.0px;background:transparent;box-sizing:border-box;border:12px solid #e500c6;border-radius:6px;"></div>
<svg style="left:0;top:0" width="3840" height="2160"><path d="M1026 395 L1028.5 398.5 L695 586.5 L702 589.5 Q710 594 703 597.5 L658.5 595.5 L682 559.5 Q688 551 692 559 L687.5 571 Z" fill="#e500c6" stroke="#e500c6" stroke-width="1" stroke-linejoin="round"/></svg>
<div class="r" style="left:0.0px;top:0.0px;width:3840.0px;height:206.0px;background:#ffffff;"></div>
</body></html>
